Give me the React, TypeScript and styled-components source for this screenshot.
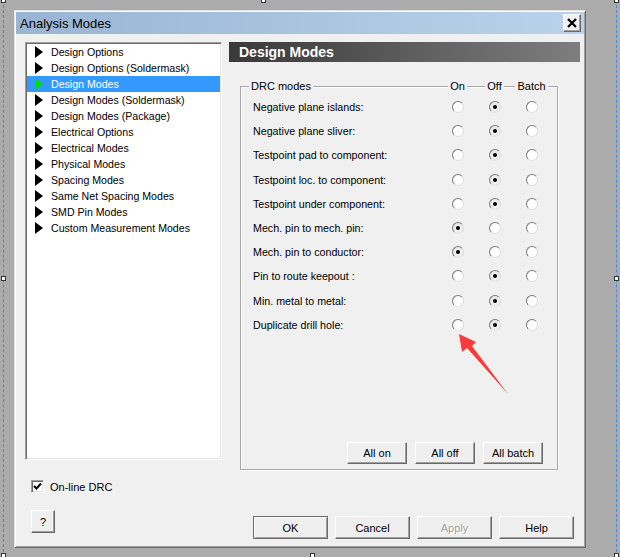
import React from "react";
import styled, { createGlobalStyle } from "styled-components";

const Global = createGlobalStyle`
  html, body { margin: 0; padding: 0; background: #ababab; overflow: hidden; }
  body { font-family: "Liberation Sans", Arial, sans-serif; font-size: 11px; color: #000; }
`;

const Page = styled.div`
  position: relative;
  width: 620px;
  height: 557px;
  box-sizing: border-box;
  padding: 10px 0 0 14px;
  background: #ababab;
  overflow: hidden;
`;

const Dialog = styled.div`
  width: 572px;
  height: 538px;
  box-sizing: border-box;
  display: flex;
  flex-direction: column;
  background: #f0f0f0;
  border: 1px solid;
  border-color: #e3e3e3 #696969 #696969 #e3e3e3;
  box-shadow: inset 1px 1px #ffffff, inset -1px -1px #a0a0a0;
  padding: 1px;
`;

const TitleBar = styled.div`
  height: 22px;
  display: flex;
  align-items: center;
  justify-content: space-between;
  padding: 0 3px 0 4px;
  background: linear-gradient(to right, #99b5d3, #bad2eb);
  font-size: 13px;
  color: #000;
`;

const CloseBtn = styled.div`
  width: 18px;
  height: 18px;
  box-sizing: border-box;
  display: flex;
  align-items: center;
  justify-content: center;
  background: #f0f0f0;
  border: 1px solid;
  border-color: #ffffff #696969 #696969 #ffffff;
  box-shadow: inset -1px -1px #a0a0a0;
`;

const Body = styled.div`
  flex: 1;
  display: flex;
  gap: 7px;
  padding: 8px 3px 0 9px;
`;

const LeftCol = styled.div`
  width: 197px;
  display: flex;
  flex-direction: column;
`;

const ListBox = styled.div`
  height: 418px;
  box-sizing: border-box;
  background: #fff;
  border: 1px solid;
  border-color: #a0a0a0 #ffffff #ffffff #a0a0a0;
  box-shadow: inset 1px 1px #696969, inset -1px -1px #e3e3e3;
  padding: 1px;
`;

const ListItem = styled.div<{ $sel: boolean }>`
  height: 16px;
  display: flex;
  align-items: center;
  gap: 8px;
  padding-left: 8px;
  font-size: 10.6px;
  background: ${(p) => (p.$sel ? "#3399ff" : "transparent")};
  color: ${(p) => (p.$sel ? "#ffffff" : "#000000")};
  white-space: nowrap;
`;

const Arrow = styled.span<{ $sel: boolean }>`
  width: 0;
  height: 0;
  border-top: 6px solid transparent;
  border-bottom: 6px solid transparent;
  border-left: 8px solid ${(p) => (p.$sel ? "#00e000" : "#000000")};
`;

const CheckRow = styled.label`
  margin-top: 20px;
  margin-left: 6px;
  display: flex;
  align-items: center;
  gap: 6px;
  height: 13px;
`;

const CheckBox = styled.span`
  width: 13px;
  height: 13px;
  box-sizing: border-box;
  background: #fff;
  border: 1px solid;
  border-color: #a0a0a0 #ffffff #ffffff #a0a0a0;
  box-shadow: inset 1px 1px #696969, inset -1px -1px #e3e3e3;
  display: flex;
  align-items: center;
  justify-content: center;
`;

const RightCol = styled.div`
  flex: 1;
  display: flex;
  flex-direction: column;
`;

const Header = styled.div`
  height: 20px;
  display: flex;
  align-items: center;
  padding-left: 10px;
  margin-right: 1px;
  background: linear-gradient(to right, #393939, #7e7e7e);
  color: #fff;
  font-weight: bold;
  font-size: 14px;
`;

const Group = styled.div`
  margin: 24px 0 0 11px;
  width: 318px;
  height: 384px;
  box-sizing: border-box;
  border: 1px solid #a8a8a8;
  box-shadow: inset 1px 1px #ffffff, 1px 1px #ffffff;
  display: flex;
  flex-direction: column;
  padding: 0 14px 5px 0;
  font-size: 10.7px;
`;

const Legend = styled.div`
  margin-top: -7px;
  height: 13px;
  display: flex;
  align-items: center;
  padding-left: 8px;
  line-height: 13px;
  font-size: 11px;
`;

const LegendText = styled.span`
  background: #f0f0f0;
  padding: 0 2px;
`;

const Spacer = styled.div`
  flex: 1;
`;

const Cell = styled.div`
  width: 37px;
  display: flex;
  justify-content: center;
  align-items: center;
`;

const Cells = styled.div`
  display: flex;
  margin-right: -7px;
`;

const Rows = styled.div`
  padding-top: 2px;
  display: flex;
  flex-direction: column;
`;

const Row = styled.div`
  height: 24.2px;
  display: flex;
  align-items: center;
  padding-left: 12px;
`;

const Radio = styled.span<{ $on: boolean }>`
  width: 12px;
  height: 12px;
  box-sizing: border-box;
  border-radius: 50%;
  border: 1px solid;
  border-color: #7c7c7c #dcdcdc #e6e6e6 #7c7c7c;
  background: ${(p) =>
    p.$on
      ? "radial-gradient(circle at 60% 60%, #f4f4f4 0%, #e4e4e4 100%)"
      : "radial-gradient(circle at 60% 60%, #ffffff 0%, #ffffff 55%, #eeeeee 100%)"};
  display: flex;
  align-items: center;
  justify-content: center;
  &::after {
    content: "";
    width: 4px;
    height: 4px;
    border-radius: 50%;
    background: #000;
    display: ${(p) => (p.$on ? "block" : "none")};
  }
`;

const GroupButtons = styled.div`
  margin-top: auto;
  display: flex;
  justify-content: flex-end;
  gap: 8px;
`;

const Btn = styled.div<{ $w: number; $h: number; $def?: boolean; $dis?: boolean }>`
  width: ${(p) => p.$w}px;
  height: ${(p) => p.$h}px;
  box-sizing: border-box;
  display: flex;
  align-items: center;
  justify-content: center;
  background: #efefef;
  font-size: 11px;
  color: ${(p) => (p.$dis ? "#a0a0a0" : "#000")};
  text-shadow: ${(p) => (p.$dis ? "1px 1px #ffffff" : "none")};
  border: 1px solid;
  border-color: ${(p) => (p.$def ? "#6b6b6b" : "#ffffff #696969 #696969 #ffffff")};
  box-shadow: ${(p) =>
    p.$def ? "inset 1px 1px #ffffff, inset -1px -1px #a0a0a0" : "inset -1px -1px #a0a0a0"};
`;

const QBtn = styled(Btn)`
  margin: 17px 0 0 6px;
`;

const BottomRow = styled.div`
  margin: 46px 0 0 24px;
  display: flex;
  gap: 7px;
`;

const DashLine = styled.div<{ $x: number }>`
  position: absolute;
  top: 0;
  bottom: 0;
  left: ${(p) => p.$x}px;
  border-left: 1px dashed #3b8ee8;
`;

const Handle = styled.div<{ $x: number; $y: number }>`
  position: absolute;
  left: ${(p) => p.$x}px;
  top: ${(p) => p.$y}px;
  width: 5px;
  height: 5px;
  box-sizing: border-box;
  background: #fff;
  border: 1px solid #333;
`;

const Overlay = styled.svg`
  position: absolute;
  left: 0;
  top: 0;
  pointer-events: none;
`;

const listItems = [
  "Design Options",
  "Design Options (Soldermask)",
  "Design Modes",
  "Design Modes (Soldermask)",
  "Design Modes (Package)",
  "Electrical Options",
  "Electrical Modes",
  "Physical Modes",
  "Spacing Modes",
  "Same Net Spacing Modes",
  "SMD Pin Modes",
  "Custom Measurement Modes",
];

const drcRows: [string, number][] = [
  ["Negative plane islands:", 1],
  ["Negative plane sliver:", 1],
  ["Testpoint pad to component:", 1],
  ["Testpoint loc. to component:", 1],
  ["Testpoint under component:", 1],
  ["Mech. pin to mech. pin:", 0],
  ["Mech. pin to conductor:", 0],
  ["Pin to route keepout :", 1],
  ["Min. metal to metal:", 1],
  ["Duplicate drill hole:", 1],
];

export default function App() {
  return (
    <Page>
      <Global />
      <Dialog>
        <TitleBar>
          <span>Analysis Modes</span>
          <CloseBtn>
            <svg width="10" height="10" viewBox="0 0 10 10">
              <path d="M1 1 L9 9 M9 1 L1 9" stroke="#000" strokeWidth="2.2" />
            </svg>
          </CloseBtn>
        </TitleBar>
        <Body>
          <LeftCol>
            <ListBox>
              {listItems.map((t, i) => (
                <ListItem key={t} $sel={i === 2}>
                  <Arrow $sel={i === 2} />
                  <span>{t}</span>
                </ListItem>
              ))}
            </ListBox>
            <CheckRow>
              <CheckBox>
                <svg width="9" height="9" viewBox="0 0 9 9">
                  <path d="M1 4 L3.5 6.5 L8 1.5" stroke="#000" strokeWidth="2" fill="none" />
                </svg>
              </CheckBox>
              <span>On-line DRC</span>
            </CheckRow>
            <QBtn $w={24} $h={23}>?</QBtn>
          </LeftCol>
          <RightCol>
            <Header>Design Modes</Header>
            <Group>
              <Legend>
                <LegendText>DRC modes</LegendText>
                <Spacer />
                <Cells>
                  <Cell>
                    <LegendText>On</LegendText>
                  </Cell>
                  <Cell>
                    <LegendText>Off</LegendText>
                  </Cell>
                  <Cell>
                    <LegendText>Batch</LegendText>
                  </Cell>
                </Cells>
              </Legend>
              <Rows>
                {drcRows.map(([label, v]) => (
                  <Row key={label}>
                    <span>{label}</span>
                    <Spacer />
                    <Cells>
                      {[0, 1, 2].map((c) => (
                        <Cell key={c}>
                          <Radio $on={v === c} />
                        </Cell>
                      ))}
                    </Cells>
                  </Row>
                ))}
              </Rows>
              <GroupButtons>
                <Btn $w={60} $h={22}>All on</Btn>
                <Btn $w={60} $h={22}>All off</Btn>
                <Btn $w={60} $h={22}>All batch</Btn>
              </GroupButtons>
            </Group>
            <BottomRow>
              <Btn $w={75} $h={23} $def>OK</Btn>
              <Btn $w={75} $h={23}>Cancel</Btn>
              <Btn $w={75} $h={23} $dis>Apply</Btn>
              <Btn $w={75} $h={23}>Help</Btn>
            </BottomRow>
          </RightCol>
        </Body>
      </Dialog>
      <DashLine $x={3} />
      <DashLine $x={616} />
      <Handle $x={1} $y={-2} />
      <Handle $x={261} $y={-2} />
      <Handle $x={614} $y={-2} />
      <Handle $x={1} $y={276} />
      <Handle $x={614} $y={276} />
      <Handle $x={1} $y={553} />
      <Handle $x={310} $y={553} />
      <Handle $x={614} $y={553} />
      <Overlay width="620" height="557" viewBox="0 0 620 557">
        <polygon
          points="459,334 476,342 472,346 508,394 467,348 462,352"
          fill="#fb3a3a"
        />
      </Overlay>
    </Page>
  );
}
